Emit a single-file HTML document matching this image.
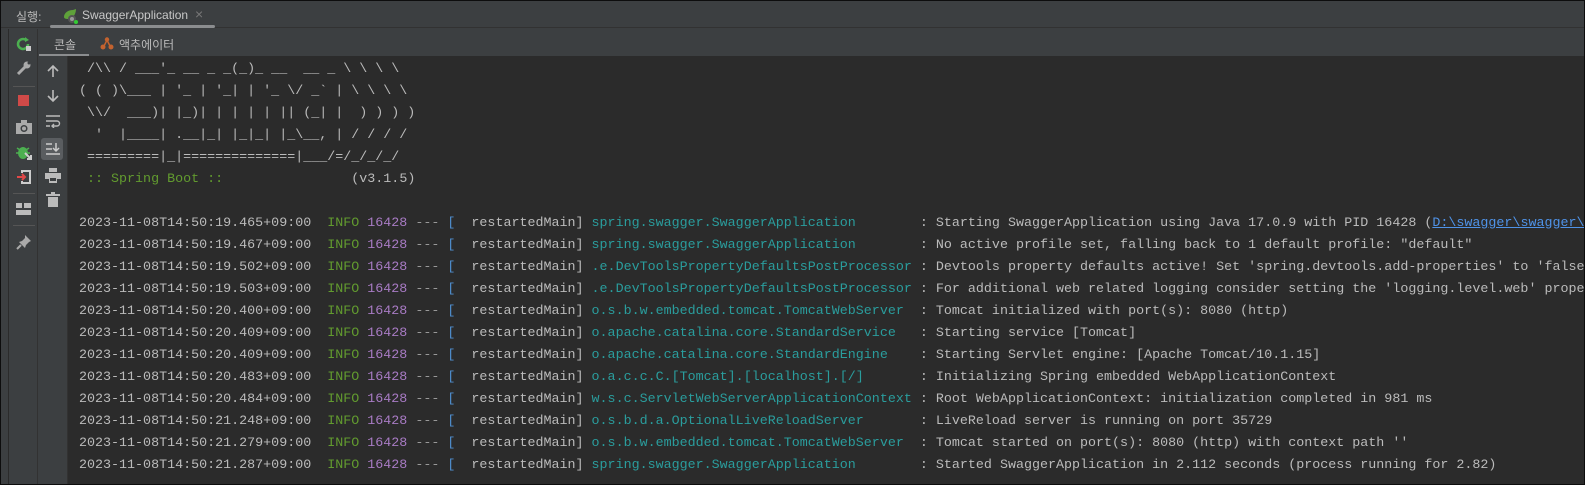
<!DOCTYPE html>
<html><head><meta charset="utf-8">
<style>
*{margin:0;padding:0;box-sizing:border-box}
html,body{width:1585px;height:485px;overflow:hidden;background:#000}
#win{position:absolute;left:0;top:0;width:1585px;height:485px;border:1px solid #0d0d0d;background:#3c3f41;overflow:hidden}
#top{position:absolute;left:0;top:0;width:1585px;height:27px;background:#3c3f41;border-bottom:1px solid #323232;font-family:"Liberation Sans","Noto Sans CJK KR",sans-serif;font-size:12px;color:#bbbbbb}
#strip{position:absolute;left:0;top:28px;width:8px;height:457px;background:#3c3f41;border-right:1px solid #2b2b2b}
#lt{position:absolute;left:9px;top:28px;width:28px;height:457px;background:#3c3f41;border-right:1px solid #323232}
#sub{position:absolute;left:38px;top:28px;width:1547px;height:27px;background:#3c3f41;font-family:"Liberation Sans","Noto Sans CJK KR",sans-serif;font-size:12px;color:#bbbbbb}
#lt2{position:absolute;left:38px;top:55px;width:29px;height:430px;background:#3c3f41;border-right:1px solid #323232}
#con{position:absolute;left:67px;top:55px;width:1518px;height:430px;background:#2b2b2b;overflow:hidden}
pre{position:absolute;left:11px;top:3px;font-family:"Liberation Mono",monospace;font-size:13.35px;line-height:22px;color:#bbbbbb;white-space:pre}
.g{color:#629b2f}.p{color:#a87bc4}.t{color:#2a9d9d}.b{color:#4f8fd0}.d{color:#999}
.l{color:#4f93e8;text-decoration:underline}
.ic{position:absolute}
</style></head><body><div id="win">
<div id="top">
 <span style="position:absolute;left:15px;top:7px">실행:</span>
 <svg class="ic" style="left:61px;top:7px" width="18" height="16" viewBox="0 0 18 16"><path d="M2 9c0-4 4-7 9-7l3-1c0 4-2 9-7 10-2 0-5 0-5-2z" fill="#5fa13a"/><circle cx="10" cy="11" r="4" fill="#555"/><circle cx="10" cy="11" r="2" fill="#999"/><circle cx="14" cy="14" r="2" fill="#3c3"/></svg>
 <span style="position:absolute;left:81px;top:7px;color:#c8c8c8">SwaggerApplication</span>
 <span style="position:absolute;left:194px;top:5px;color:#777;font-size:14px">×</span>
 <div style="position:absolute;left:49px;top:24px;width:165px;height:3px;background:#8b8d8f;border-radius:2px"></div>
</div>
<div id="strip"></div>
<div id="lt">
 <svg class="ic" style="left:6px;top:7px" width="16" height="16" viewBox="0 0 16 16"><path d="M12 8a5 5 0 1 1-2-4" stroke="#4caf50" stroke-width="2.5" fill="none"/><path d="M9 1l4 3-4 2z" fill="#4caf50"/><rect x="10" y="10" width="5" height="5" fill="#ccc"/></svg>
 <svg class="ic" style="left:6px;top:31px" width="16" height="16" viewBox="0 0 16 16"><path d="M2 14l7-7" stroke="#aaa" stroke-width="3"/><circle cx="11" cy="5" r="3.5" fill="#aaa"/><circle cx="13" cy="3" r="1.5" fill="#3c3f41"/></svg>
 <div class="ic" style="left:3px;top:57px;width:22px;height:1px;background:#555"></div>
 <div class="ic" style="left:8px;top:66px;width:11px;height:11px;background:#d04a48"></div>
 <svg class="ic" style="left:6px;top:91px" width="16" height="14" viewBox="0 0 16 14"><rect x="0" y="3" width="16" height="11" fill="#aaa"/><rect x="5" y="0" width="6" height="4" fill="#aaa"/><circle cx="8" cy="8.5" r="3.5" fill="#3c3f41"/><circle cx="8" cy="8.5" r="2" fill="#aaa"/></svg>
 <svg class="ic" style="left:6px;top:115px" width="16" height="16" viewBox="0 0 16 16"><ellipse cx="7" cy="9" rx="5" ry="6" fill="#4caf50"/><path d="M1 4l3 2M13 4l-3 2M0 9h3M11 9h3" stroke="#4caf50" stroke-width="1.5"/><path d="M9 9l6 6M11 15h4v-4" stroke="#ccc" stroke-width="2" fill="none"/></svg>
 <svg class="ic" style="left:6px;top:140px" width="16" height="16" viewBox="0 0 16 16"><path d="M5 1h10v14H5v-3h2v1h6V3H7v1H5z" fill="#ccc"/><path d="M1 8h7M6 5l3 3-3 3" stroke="#e04848" stroke-width="2" fill="none"/></svg>
 <div class="ic" style="left:3px;top:164px;width:22px;height:1px;background:#555"></div>
 <svg class="ic" style="left:6px;top:173px" width="16" height="14" viewBox="0 0 16 14"><rect x="0" y="1" width="6" height="5" fill="#bbb"/><rect x="8" y="1" width="7" height="5" fill="#bbb"/><rect x="0" y="8" width="15" height="5" fill="#bbb"/></svg>
 <div class="ic" style="left:3px;top:196px;width:22px;height:1px;background:#555"></div>
 <svg class="ic" style="left:6px;top:205px" width="16" height="16" viewBox="0 0 16 16"><path d="M9 1l6 6-2 1-3 3-1 3-6-6 3-1 3-3z" fill="#aaa"/><path d="M5 11l-4 4" stroke="#aaa" stroke-width="2"/></svg>
</div>
<div id="sub">
 <span style="position:absolute;left:15px;top:7px">콘솔</span>
 <div style="position:absolute;left:0;top:25px;width:50px;height:2px;background:#8b8d8f"></div>
 <svg class="ic" style="left:61px;top:7px" width="14" height="14" viewBox="0 0 14 14"><path d="M4 10l3-6 3 6" stroke="#c4632f" stroke-width="1.5" fill="none"/><circle cx="7" cy="3.5" r="2.2" fill="#c4632f"/><circle cx="3" cy="11" r="2.5" fill="#c4632f"/><circle cx="11" cy="11" r="2.5" fill="#c4632f"/></svg>
 <span style="position:absolute;left:80px;top:7px">액추에이터</span>
</div>
<div id="lt2">
 <svg class="ic" style="left:7px;top:8px" width="14" height="14" viewBox="0 0 14 14"><path d="M7 13V2M2 7l5-5 5 5" stroke="#bbb" stroke-width="1.6" fill="none"/></svg>
 <svg class="ic" style="left:7px;top:33px" width="14" height="14" viewBox="0 0 14 14"><path d="M7 1v11M2 7l5 5 5-5" stroke="#bbb" stroke-width="1.6" fill="none"/></svg>
 <svg class="ic" style="left:6px;top:58px" width="16" height="14" viewBox="0 0 16 14"><path d="M1 2h14M1 7h11a2.5 2.5 0 0 1 0 5H8M1 12h4M9 10l-2 2 2 2" stroke="#bbb" stroke-width="1.4" fill="none"/></svg>
 <div class="ic" style="left:2px;top:82px;width:22px;height:22px;background:#5a5d60;border-radius:3px"></div>
 <svg class="ic" style="left:6px;top:86px" width="16" height="14" viewBox="0 0 16 14"><path d="M1 2h6M1 7h6M1 12h14M11 1v8M8 6l3 3 3-3" stroke="#ccc" stroke-width="1.5" fill="none"/></svg>
 <svg class="ic" style="left:6px;top:112px" width="16" height="15" viewBox="0 0 16 15"><rect x="4" y="0" width="8" height="4" fill="#bbb"/><rect x="0" y="5" width="16" height="6" fill="#bbb"/><rect x="4" y="10" width="8" height="5" fill="#bbb"/><rect x="5" y="10" width="6" height="3" fill="#3c3f41"/></svg>
 <svg class="ic" style="left:7px;top:136px" width="14" height="15" viewBox="0 0 14 15"><rect x="0" y="2" width="14" height="2" fill="#bbb"/><rect x="5" y="0" width="4" height="2" fill="#bbb"/><rect x="2" y="5" width="10" height="10" fill="#bbb"/></svg>
</div>
<div id="con"><pre> /\\ / ___'_ __ _ _(_)_ __  __ _ \ \ \ \
( ( )\___ | '_ | '_| | '_ \/ _` | \ \ \ \
 \\/  ___)| |_)| | | | | || (_| |  ) ) ) )
  '  |____| .__|_| |_|_| |_\__, | / / / /
 =========|_|==============|___/=/_/_/_/
<span class="g"> :: Spring Boot :: </span>               (v3.1.5)

2023-11-08T14:50:19.465+09:00  <span class="g">INFO</span> <span class="p">16428</span> <span class="d">---</span> <span class="b">[</span>  restartedMain] <span class="t">spring.swagger.SwaggerApplication       </span> : Starting SwaggerApplication using Java 17.0.9 with PID 16428 (<span class="l">D:\swagger\swagger\build</span>
2023-11-08T14:50:19.467+09:00  <span class="g">INFO</span> <span class="p">16428</span> <span class="d">---</span> <span class="b">[</span>  restartedMain] <span class="t">spring.swagger.SwaggerApplication       </span> : No active profile set, falling back to 1 default profile: "default"
2023-11-08T14:50:19.502+09:00  <span class="g">INFO</span> <span class="p">16428</span> <span class="d">---</span> <span class="b">[</span>  restartedMain] <span class="t">.e.DevToolsPropertyDefaultsPostProcessor</span> : Devtools property defaults active! Set 'spring.devtools.add-properties' to 'false' to disable
2023-11-08T14:50:19.503+09:00  <span class="g">INFO</span> <span class="p">16428</span> <span class="d">---</span> <span class="b">[</span>  restartedMain] <span class="t">.e.DevToolsPropertyDefaultsPostProcessor</span> : For additional web related logging consider setting the 'logging.level.web' property to 'DEBUG'
2023-11-08T14:50:20.400+09:00  <span class="g">INFO</span> <span class="p">16428</span> <span class="d">---</span> <span class="b">[</span>  restartedMain] <span class="t">o.s.b.w.embedded.tomcat.TomcatWebServer </span> : Tomcat initialized with port(s): 8080 (http)
2023-11-08T14:50:20.409+09:00  <span class="g">INFO</span> <span class="p">16428</span> <span class="d">---</span> <span class="b">[</span>  restartedMain] <span class="t">o.apache.catalina.core.StandardService  </span> : Starting service [Tomcat]
2023-11-08T14:50:20.409+09:00  <span class="g">INFO</span> <span class="p">16428</span> <span class="d">---</span> <span class="b">[</span>  restartedMain] <span class="t">o.apache.catalina.core.StandardEngine   </span> : Starting Servlet engine: [Apache Tomcat/10.1.15]
2023-11-08T14:50:20.483+09:00  <span class="g">INFO</span> <span class="p">16428</span> <span class="d">---</span> <span class="b">[</span>  restartedMain] <span class="t">o.a.c.c.C.[Tomcat].[localhost].[/]      </span> : Initializing Spring embedded WebApplicationContext
2023-11-08T14:50:20.484+09:00  <span class="g">INFO</span> <span class="p">16428</span> <span class="d">---</span> <span class="b">[</span>  restartedMain] <span class="t">w.s.c.ServletWebServerApplicationContext</span> : Root WebApplicationContext: initialization completed in 981 ms
2023-11-08T14:50:21.248+09:00  <span class="g">INFO</span> <span class="p">16428</span> <span class="d">---</span> <span class="b">[</span>  restartedMain] <span class="t">o.s.b.d.a.OptionalLiveReloadServer      </span> : LiveReload server is running on port 35729
2023-11-08T14:50:21.279+09:00  <span class="g">INFO</span> <span class="p">16428</span> <span class="d">---</span> <span class="b">[</span>  restartedMain] <span class="t">o.s.b.w.embedded.tomcat.TomcatWebServer </span> : Tomcat started on port(s): 8080 (http) with context path ''
2023-11-08T14:50:21.287+09:00  <span class="g">INFO</span> <span class="p">16428</span> <span class="d">---</span> <span class="b">[</span>  restartedMain] <span class="t">spring.swagger.SwaggerApplication       </span> : Started SwaggerApplication in 2.112 seconds (process running for 2.82)</pre></div>
</div></body></html>
